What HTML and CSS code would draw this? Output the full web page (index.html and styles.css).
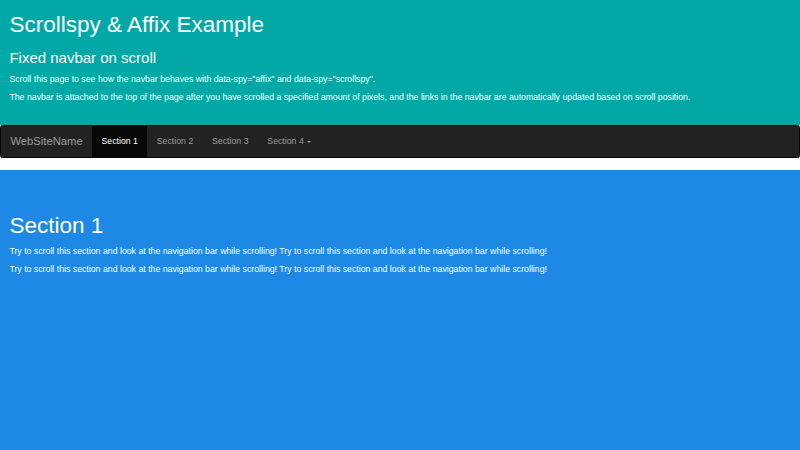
FILE: index.html
```
<!DOCTYPE html>
<html>
<head>
<meta charset="utf-8">
<link rel="stylesheet" href="styles.css">
</head>
<body>
<header class="hero">
  <h1>Scrollspy &amp; Affix Example</h1>
  <h3>Fixed navbar on scroll</h3>
  <p>Scroll this page to see how the navbar behaves with data-spy="affix" and data-spy="scrollspy".</p>
  <p>The navbar is attached to the top of the page after you have scrolled a specified amount of pixels, and the links in the navbar are automatically updated based on scroll position.</p>
</header>
<nav class="navbar">
  <a class="brand" href="#">WebSiteName</a>
  <ul class="nav">
    <li class="active"><a href="#section1">Section 1</a></li>
    <li><a href="#section2">Section 2</a></li>
    <li><a href="#section3">Section 3</a></li>
    <li><a href="#section4">Section 4 <span class="caret"></span></a></li>
  </ul>
</nav>
<section class="section" id="section1">
  <h1>Section 1</h1>
  <p>Try to scroll this section and look at the navigation bar while scrolling! Try to scroll this section and look at the navigation bar while scrolling!</p>
  <p>Try to scroll this section and look at the navigation bar while scrolling! Try to scroll this section and look at the navigation bar while scrolling!</p>
</section>
</body>
</html>
```
FILE: styles.css
```
* { box-sizing: border-box; }
html, body { margin: 0; padding: 0; }
body {
  font-family: "Liberation Sans", Arial, sans-serif;
  font-size: 8.75px;
  line-height: 1.42857;
  color: #333;
  background: #fff;
}
h1 {
  font-size: 22.5px;
  font-weight: 500;
  line-height: 1.1;
  margin: 12.5px 0 6.25px;
}
h3 {
  font-size: 15px;
  font-weight: 500;
  line-height: 1.1;
  margin: 12.5px 0 6.25px;
}
p { margin: 0 0 6.25px; }

.hero {
  background: #02a8a6;
  color: #fff;
  height: 125px;
  padding: 1px 9.4px 0;
  margin: 0;
}
.hero h1 { margin-top: 11.5px; }

.navbar {
  display: flex;
  align-items: stretch;
  background: #222;
  border: 1px solid #080808;
  border-radius: 2.5px;
  margin-bottom: 12.5px;
}
.brand {
  display: block;
  padding: 9px 9.4px;
  font-size: 11.25px;
  line-height: 12.5px;
  color: #9d9d9d;
  text-decoration: none;
}
.nav {
  display: flex;
  list-style: none;
  margin: 0;
  padding: 0;
}
.nav a {
  display: block;
  padding: 9px 9.4px;
  line-height: 12.5px;
  color: #9d9d9d;
  text-decoration: none;
  height: 100%;
}
.nav .active a {
  background: #080808;
  color: #fff;
}
.caret {
  display: inline-block;
  width: 0;
  height: 0;
  margin-left: 1.25px;
  vertical-align: middle;
  border-top: 2.5px solid;
  border-left: 2.5px solid transparent;
  border-right: 2.5px solid transparent;
}

.section {
  background: #1e88e5;
  color: #fff;
  height: 312.5px;
  padding: 31.25px 9.4px 0;
}
```
